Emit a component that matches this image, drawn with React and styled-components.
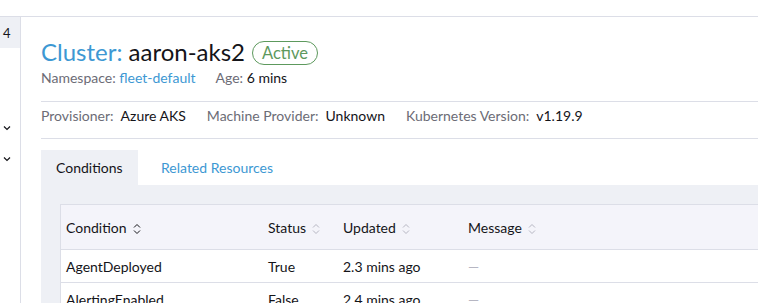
import React from 'react';
import styled, { createGlobalStyle } from 'styled-components';

const GlobalStyle = createGlobalStyle`
  html, body {
    margin: 0;
    padding: 0;
    background: #fff;
    overflow: hidden;
  }
  body {
    font-family: Lato, "Open Sans", sans-serif;
    color: #141419;
  }
`;

const Page = styled.div`
  display: flex;
  flex-direction: column;
  width: 900px;
`;

const TopBar = styled.div`
  flex-shrink: 0;
  height: 16px;
  border-bottom: 1px solid #dcdee7;
`;

const Body = styled.div`
  display: flex;
`;

const Sidebar = styled.div`
  flex-shrink: 0;
  width: 20px;
  border-right: 1px solid #dcdee7;
  display: flex;
  flex-direction: column;
`;

const SideItem = styled.div`
  height: ${(p) => p.$h}px;
  display: flex;
  align-items: center;
  padding-left: ${(p) => (p.$chevron ? 3 : 3)}px;
  background: ${(p) => (p.$active ? '#eef0f5' : 'transparent')};
  font-size: 13px;
  color: #141419;
`;

const Main = styled.div`
  flex: 1;
  padding: 20px 0 0 20px;
`;

const TitleRow = styled.div`
  display: flex;
  align-items: center;
  gap: 7px;
  height: 30px;
`;

const Title = styled.h1`
  margin: 0;
  font-size: 24px;
  font-weight: 400;
  line-height: 30px;
`;

const TitleType = styled.span`
  color: #3d98d3;
`;

const Badge = styled.span`
  border: 1px solid #5d995d;
  color: #5d995d;
  border-radius: 12px;
  font-size: 16.5px;
  line-height: 22px;
  padding: 0 9px;
  margin-top: 1px;
`;

const SubRow = styled.div`
  display: flex;
  gap: 20px;
  font-size: 14px;
  margin-top: 2px;
  line-height: 18px;
`;

const Label = styled.span`
  color: #6c6c76;
`;

const Link = styled.span`
  color: #3d98d3;
`;

const Divider = styled.div`
  border-top: 1px solid #dcdee7;
  margin-top: ${(p) => p.$mt}px;
`;

const InfoRow = styled.div`
  display: flex;
  gap: 21px;
  font-size: 14px;
  height: 36px;
  box-sizing: border-box;
  padding-bottom: 9px;
  align-items: center;
`;

const InfoItem = styled.span`
  display: flex;
  gap: 7px;
`;

const Tabs = styled.div`
  display: flex;
  margin-top: 11px;
`;

const Tab = styled.div`
  padding: 0 15px;
  height: 35px;
  display: flex;
  align-items: center;
  font-size: 14px;
  width: ${(p) => (p.$active ? '97px' : 'auto')};
  box-sizing: border-box;
  margin-right: ${(p) => (p.$active ? '8px' : '0')};
  background: ${(p) => (p.$active ? '#eef0f5' : 'transparent')};
  color: ${(p) => (p.$active ? '#141419' : '#3d98d3')};
`;

const TabPanel = styled.div`
  background: #eef0f5;
  padding: 19px 20px 20px 19px;
`;

const Table = styled.table`
  border-collapse: collapse;
  width: 100%;
  background: #fff;
  border: 1px solid #dcdee7;
  font-size: 14px;
`;

const Th = styled.th`
  background: #f4f4fa;
  font-weight: 400;
  text-align: left;
  height: 44px;
  padding: 0 5px;
  border-bottom: 1px solid #dcdee7;
  width: ${(p) => p.$w || 'auto'};
  white-space: nowrap;
`;

const Td = styled.td`
  height: 32px;
  padding: 0 5px;
  border-bottom: 1px solid #dcdee7;
  color: ${(p) => (p.$muted ? '#b6b6c2' : '#141419')};
`;

const SortIcon = ({ dark }) => (
  <svg width="10" height="12" viewBox="0 0 10 12" style={{ marginLeft: 5, verticalAlign: -2 }}>
    <polyline points="2,4.5 5,1.5 8,4.5" fill="none" stroke={dark ? '#141419' : '#b6b6c2'} strokeWidth="1" />
    <polyline points="2,7.5 5,10.5 8,7.5" fill="none" stroke={dark ? '#141419' : '#b6b6c2'} strokeWidth="1" />
  </svg>
);

const Chevron = () => (
  <svg width="8" height="6" viewBox="0 0 8 6">
    <polyline points="1,1.5 4,4.5 7,1.5" fill="none" stroke="#141419" strokeWidth="1.2" />
  </svg>
);

const rows = [
  ['AgentDeployed', 'True', '2.3 mins ago'],
  ['AlertingEnabled', 'False', '2.4 mins ago'],
];

const App = () => (
  <>
    <GlobalStyle />
    <Page>
      <TopBar />
      <Body>
        <Sidebar>
          <SideItem $h={31} $active>4</SideItem>
          <SideItem $h={64} />
          <SideItem $h={31} $chevron><Chevron /></SideItem>
          <SideItem $h={31} $chevron><Chevron /></SideItem>
        </Sidebar>
        <Main>
          <TitleRow>
            <Title><TitleType>Cluster:</TitleType> aaron-aks2</Title>
            <Badge>Active</Badge>
          </TitleRow>
          <SubRow>
            <span><Label>Namespace: </Label><Link>fleet-default</Link></span>
            <span><Label>Age: </Label>6 mins</span>
          </SubRow>
          <Divider $mt={14} />
          <InfoRow>
            <InfoItem><Label>Provisioner:</Label>Azure AKS</InfoItem>
            <InfoItem><Label>Machine Provider:</Label>Unknown</InfoItem>
            <InfoItem><Label>Kubernetes Version:</Label>v1.19.9</InfoItem>
          </InfoRow>
          <Divider $mt={0} />
          <Tabs>
            <Tab $active>Conditions</Tab>
            <Tab>Related Resources</Tab>
          </Tabs>
          <TabPanel>
            <Table>
              <thead>
                <tr>
                  <Th $w="192px">Condition<SortIcon dark /></Th>
                  <Th $w="65px">Status<SortIcon /></Th>
                  <Th $w="115px">Updated<SortIcon /></Th>
                  <Th>Message<SortIcon /></Th>
                </tr>
              </thead>
              <tbody>
                {rows.map((r) => (
                  <tr key={r[0]}>
                    <Td>{r[0]}</Td>
                    <Td>{r[1]}</Td>
                    <Td>{r[2]}</Td>
                    <Td $muted>—</Td>
                  </tr>
                ))}
              </tbody>
            </Table>
          </TabPanel>
        </Main>
      </Body>
    </Page>
  </>
);

export default App;
